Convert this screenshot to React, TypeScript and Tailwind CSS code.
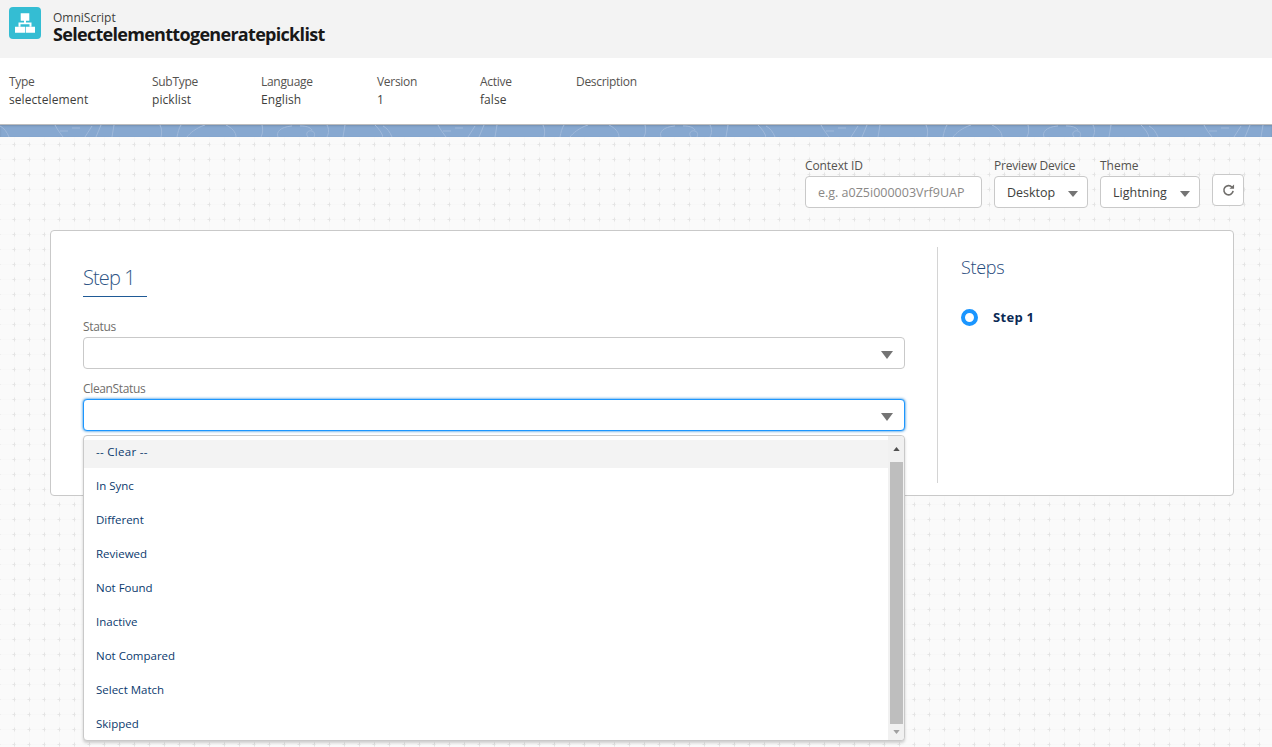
const metaItems = [
	{ label: 'Type', value: 'selectelement', width: 'w-[143px]' },
	{ label: 'SubType', value: 'picklist', width: 'w-[109px]' },
	{ label: 'Language', value: 'English', width: 'w-[116px]' },
	{ label: 'Version', value: '1', width: 'w-[103px]' },
	{ label: 'Active', value: 'false', width: 'w-[96px]' },
	{ label: 'Description', value: '', width: 'w-[100px]' },
];

const options = ['In Sync', 'Different', 'Reviewed', 'Not Found', 'Inactive', 'Not Compared', 'Select Match', 'Skipped'];

const Caret = ({ className }: { className: string }) => (
	<svg viewBox="0 0 12 8" preserveAspectRatio="none" className={className}>
		<path d="M0 0h12L6 8z" fill="#747474" />
	</svg>
);

const DotGrid = () => (
	<svg className="absolute inset-0 h-full w-full">
		<defs>
			<pattern id="dots" width="15" height="15" patternUnits="userSpaceOnUse">
				<path d="M14.5 0v15M0 7.5h15" stroke="#f8f8f8" strokeWidth="1" fill="none" />
				<path d="M14.5 5.5v4M12.5 7.5h3M0 7.5h.5" stroke="#e4e4e4" strokeWidth="1" fill="none" />
			</pattern>
		</defs>
		<rect width="100%" height="100%" fill="url(#dots)" />
	</svg>
);

const Band = () => (
	<svg viewBox="0 0 383 12" className="h-3 w-[383px] shrink-0">
		<g stroke="#a0b9da" strokeWidth="1" fill="none">
			<path d="M0 1c4 2 7 6 9 11M55 0c2 4 5 8 8 12M60 6h8M72 3h8M92 1l-7 11M101 0l-5 12M114 0l-2 12" />
			<path d="M160 0c2 4 2 8 1 12M177 12c1-5 2-9 4-12M187 12c3-4 9-9 18-12M226 0c6 3 10 7 10 12" />
			<path d="M261 12c2-4 2-8 1-12M278 12c-2-5 2-10 14-11M300 1c6 0 10 1 12 4M308 12c-3-4 0-7 4-6 3 1 3 4 2 6M327 0c2 4 2 8 0 12M345 0l-2 12" />
			<path d="M375 0c4 4 7 8 8 12" />
		</g>
	</svg>
);

const FieldLabel = ({ children, className }: { children: string; className: string }) => (
	<div className={`mb-px text-xs leading-[19px] tracking-[-0.35px] text-[#706e6b] ${className}`}>{children}</div>
);

const ToolbarLabel = ({ children, className = '' }: { children: string; className?: string }) => (
	<div className={`mb-[2px] text-xs leading-[17px] text-[#54524f] ${className}`}>{children}</div>
);

const App = () => {
	return (
		<div className="flex h-[747px] w-[1272px] flex-col overflow-hidden bg-[#fafafa] font-['Open_Sans',sans-serif] text-[#3e3e3c]">
			<header className="flex h-[58px] shrink-0 items-start gap-3 bg-[#f3f3f3] pl-[9px] pt-[7px]">
				<div className="h-8 w-8 rounded bg-[#34bdd3]">
					<svg viewBox="0 0 32 32" className="h-8 w-8" fill="#fff">
						<path d="M11.7 6.3h8.6v7.4h-8.6zM15 13.7h2v1.8h5.5v4.2h-2v-2.4h-9v2.4h-2v-4.2H15z" />
						<path d="M6 19.7h10v6H6zM16.7 19.7H26v6h-9.3z" />
					</svg>
				</div>
				<div className="mt-[3px] flex flex-col">
					<span className="text-xs leading-[16px]">OmniScript</span>
					<span className="text-lg font-bold leading-[17px] tracking-[-0.7px] text-[#181818]">Selectelementtogeneratepicklist</span>
				</div>
			</header>

			<section className="flex h-[66px] shrink-0 items-start bg-white pl-[9px] pt-[15px]">
				{metaItems.map((item) => (
					<div key={item.label} className={item.width}>
						<div className="text-xs leading-[18px] tracking-[-0.3px] text-[#54524f]">{item.label}</div>
						<div className="text-xs leading-[17px] tracking-[0.08px]">{item.value}</div>
					</div>
				))}
			</section>

			<div className="flex h-[13px] shrink-0 overflow-hidden border-t border-[#bdbdbd] bg-[#87a8d0] shadow-[inset_0_1px_2px_rgba(0,0,0,0.15)]">
				<Band />
				<Band />
				<Band />
				<Band />
			</div>

			<main className="relative flex-1">
				<DotGrid />
				<div className="relative">
					<div className="flex items-start justify-end gap-3 pr-7 pt-[20px]">
						<div className="w-[177px]">
							<ToolbarLabel className="tracking-[-0.1px]">Context ID</ToolbarLabel>
							<div className="flex h-[32px] items-center rounded border border-[#c9c9c9] bg-white pl-3 pt-[3px] text-[12.5px] text-[#8a8886]">e.g. a0Z5i000003Vrf9UAP</div>
						</div>
						<div className="w-[94px]">
							<ToolbarLabel className="tracking-[-0.2px]">Preview Device</ToolbarLabel>
							<div className="flex h-[32px] items-center justify-between rounded border border-[#c9c9c9] bg-white pl-3 pr-[9px] pt-[3px] text-[12.5px]">
								Desktop
								<Caret className="h-[6px] w-[10px]" />
							</div>
						</div>
						<div className="w-[100px]">
							<ToolbarLabel>Theme</ToolbarLabel>
							<div className="flex h-[32px] items-center justify-between rounded border border-[#c9c9c9] bg-white pl-3 pr-[9px] pt-[3px] text-[12.5px]">
								Lightning
								<Caret className="h-[6px] w-[10px]" />
							</div>
						</div>
						<div className="mt-[17px] flex h-8 w-8 items-center justify-center rounded border border-[#c9c9c9] bg-white">
							<svg viewBox="0 0 14 14" className="h-[13px] w-[13px]" fill="none" stroke="#706e6b" strokeWidth="1.7">
								<path d="M10.8 3.4A5 5 0 1 0 12 7.5" />
								<path d="M8 5.2h5V.5z" fill="#706e6b" stroke="none" />
							</svg>
						</div>
					</div>

					<div className="relative ml-[50px] mt-[22px] flex h-[266px] w-[1184px] rounded border border-[#c9c9c9] bg-white pl-8 pt-4">
						<div className="w-[822px]">
							<div className="h-[50px] w-16 border-b border-[#1f5a96] pt-[17px] text-xl font-light leading-[28px] tracking-[-0.9px] text-[#2e5585]">Step 1</div>
							<FieldLabel className="mt-5">Status</FieldLabel>
							<div className="flex h-8 items-center justify-end rounded border border-[#c9c9c9] bg-white pr-[11px]">
								<Caret className="mt-1 h-[8px] w-3" />
							</div>
							<FieldLabel className="mt-[10px]">CleanStatus</FieldLabel>
							<div className="flex h-8 items-center justify-end rounded border border-[#1b96ff] bg-white pr-[11px] shadow-[0_0_3px_#0176d3]">
								<Caret className="mt-1 h-[8px] w-3" />
							</div>
						</div>
						<div className="mb-[12px] ml-8 border-l border-[#d4d4d4] pl-[23px]">
							<div className="pt-px text-lg font-light leading-[38px] tracking-[-0.3px] text-[#1f4a7c]">Steps</div>
							<div className="mt-[21px] flex items-center gap-[15px]">
								<span className="h-[17px] w-[17px] rounded-full border-[4px] border-[#1b96ff] bg-white" />
								<span className="mt-px text-[13px] font-bold tracking-[0.3px] text-[#0b2a55]">Step 1</span>
							</div>
						</div>

						<div className="absolute left-8 top-[204px] flex h-[306px] w-[822px] rounded border border-[#c9c9c9] bg-white py-1 shadow-[0_2px_3px_rgba(0,0,0,0.18)]">
							<ul className="flex-1">
								<li className="flex h-7 items-center bg-[#f3f3f3] pb-1 pl-3 text-[11.5px] tracking-[0.3px] text-[#0b3a6e]">-- Clear --</li>
								{options.map((option) => (
									<li key={option} className="mt-[6px] flex h-7 items-center pb-1 pl-3 text-[11.5px] text-[#0b3a6e]">{option}</li>
								))}
							</ul>
							<div className="-my-1 flex w-[16px] flex-col items-center rounded-r bg-[#f1f1f1]">
								<div className="flex h-[26px] items-center justify-center">
									<svg viewBox="0 0 8 5" className="h-1 w-[7px]"><path d="M0 5h8L4 0z" fill="#505050" /></svg>
								</div>
								<div className="h-[262px] w-[13px] bg-[#bebebe]" />
								<div className="flex flex-1 items-center justify-center">
									<svg viewBox="0 0 8 5" className="h-1 w-[7px]"><path d="M0 0h8L4 5z" fill="#a0a0a0" /></svg>
								</div>
							</div>
						</div>
					</div>
				</div>
			</main>
		</div>
	);
};

export default App;
